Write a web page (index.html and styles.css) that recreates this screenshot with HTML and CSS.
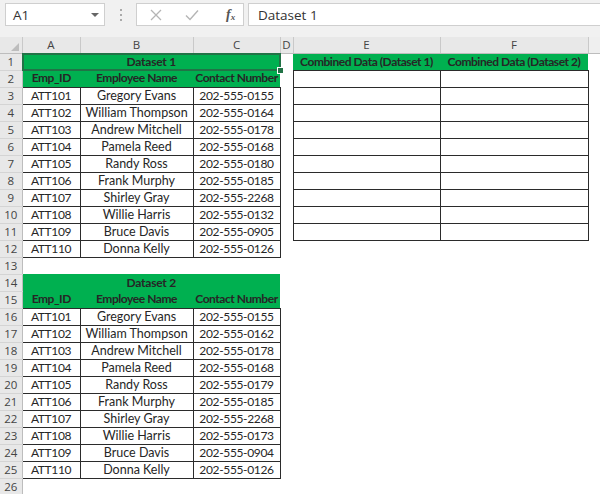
FILE: index.html
```html
<!DOCTYPE html>
<html>
<head>
<meta charset="utf-8">
<link rel="stylesheet" href="styles.css">
</head>
<body>
<div class="fbar">
  <div class="namebox"><span>A1</span><span class="dd"></span></div>
  <div class="dots"><i></i><i></i><i></i></div>
  <div class="btns">
    <svg class="ic" width="12" height="12" viewBox="0 0 12 12"><path d="M1 1L11 11M11 1L1 11" stroke="#b5b5b5" stroke-width="1.3" fill="none"/></svg>
    <svg class="ic" width="14" height="12" viewBox="0 0 14 12"><path d="M1 6.5L5 10.5L13 1.5" stroke="#b5b5b5" stroke-width="1.4" fill="none"/></svg>
    <span class="fx">f<sub>x</sub></span>
  </div>
  <div class="finput">Dataset 1</div>
</div>
<div class="gap"></div>
<table class="sheet">
  <colgroup>
    <col class="c-rh"><col class="c-a"><col class="c-b"><col class="c-c"><col class="c-d"><col class="c-e"><col class="c-f"><col class="c-g">
  </colgroup>
  <tr class="colhdr">
    <th class="corner"><span class="tri"></span></th><th>A</th><th>B</th><th>C</th><th>D</th><th>E</th><th>F</th><th class="last"></th>
  </tr>
  <tr>
    <th class="rh">1</th>
    <td colspan="3" class="title sel">Dataset 1<span class="selbox"><span class="handle"></span></span></td>
    <td></td>
    <td class="hd hd-l">Combined Data (Dataset 1)</td>
    <td class="hd hd-r">Combined Data (Dataset 2)</td>
    <td></td>
  </tr>
  <tr>
    <th class="rh">2</th>
    <td class="hd hd-l">Emp_ID</td><td class="hd hd-m">Employee Name</td><td class="hd hd-r">Contact Number</td>
    <td></td><td class="b"></td><td class="b"></td><td></td>
  </tr>
  <tr class="dr"><th class="rh">3</th><td class="b">ATT101</td><td class="b">Gregory Evans</td><td class="b">202-555-0155</td><td></td><td class="b"></td><td class="b"></td><td></td></tr>
  <tr class="dr"><th class="rh">4</th><td class="b">ATT102</td><td class="b">William Thompson</td><td class="b">202-555-0164</td><td></td><td class="b"></td><td class="b"></td><td></td></tr>
  <tr class="dr"><th class="rh">5</th><td class="b">ATT103</td><td class="b">Andrew Mitchell</td><td class="b">202-555-0178</td><td></td><td class="b"></td><td class="b"></td><td></td></tr>
  <tr class="dr"><th class="rh">6</th><td class="b">ATT104</td><td class="b">Pamela Reed</td><td class="b">202-555-0168</td><td></td><td class="b"></td><td class="b"></td><td></td></tr>
  <tr class="dr"><th class="rh">7</th><td class="b">ATT105</td><td class="b">Randy Ross</td><td class="b">202-555-0180</td><td></td><td class="b"></td><td class="b"></td><td></td></tr>
  <tr class="dr"><th class="rh">8</th><td class="b">ATT106</td><td class="b">Frank Murphy</td><td class="b">202-555-0185</td><td></td><td class="b"></td><td class="b"></td><td></td></tr>
  <tr class="dr"><th class="rh">9</th><td class="b">ATT107</td><td class="b">Shirley Gray</td><td class="b">202-555-2268</td><td></td><td class="b"></td><td class="b"></td><td></td></tr>
  <tr class="dr"><th class="rh">10</th><td class="b">ATT108</td><td class="b">Willie Harris</td><td class="b">202-555-0132</td><td></td><td class="b"></td><td class="b"></td><td></td></tr>
  <tr class="dr"><th class="rh">11</th><td class="b">ATT109</td><td class="b">Bruce Davis</td><td class="b">202-555-0905</td><td></td><td class="b"></td><td class="b"></td><td></td></tr>
  <tr class="dr"><th class="rh">12</th><td class="b">ATT110</td><td class="b">Donna Kelly</td><td class="b">202-555-0126</td><td></td><td></td><td></td><td></td></tr>
  <tr><th class="rh">13</th><td></td><td></td><td></td><td></td><td></td><td></td><td></td></tr>
  <tr>
    <th class="rh">14</th>
    <td colspan="3" class="title">Dataset 2</td>
    <td></td><td></td><td></td><td></td>
  </tr>
  <tr>
    <th class="rh">15</th>
    <td class="hd hd-l">Emp_ID</td><td class="hd hd-m">Employee Name</td><td class="hd hd-r">Contact Number</td>
    <td></td><td></td><td></td><td></td>
  </tr>
  <tr class="dr"><th class="rh">16</th><td class="b">ATT101</td><td class="b">Gregory Evans</td><td class="b">202-555-0155</td><td></td><td></td><td></td><td></td></tr>
  <tr class="dr"><th class="rh">17</th><td class="b">ATT102</td><td class="b">William Thompson</td><td class="b">202-555-0162</td><td></td><td></td><td></td><td></td></tr>
  <tr class="dr"><th class="rh">18</th><td class="b">ATT103</td><td class="b">Andrew Mitchell</td><td class="b">202-555-0178</td><td></td><td></td><td></td><td></td></tr>
  <tr class="dr"><th class="rh">19</th><td class="b">ATT104</td><td class="b">Pamela Reed</td><td class="b">202-555-0168</td><td></td><td></td><td></td><td></td></tr>
  <tr class="dr"><th class="rh">20</th><td class="b">ATT105</td><td class="b">Randy Ross</td><td class="b">202-555-0179</td><td></td><td></td><td></td><td></td></tr>
  <tr class="dr"><th class="rh">21</th><td class="b">ATT106</td><td class="b">Frank Murphy</td><td class="b">202-555-0185</td><td></td><td></td><td></td><td></td></tr>
  <tr class="dr"><th class="rh">22</th><td class="b">ATT107</td><td class="b">Shirley Gray</td><td class="b">202-555-2268</td><td></td><td></td><td></td><td></td></tr>
  <tr class="dr"><th class="rh">23</th><td class="b">ATT108</td><td class="b">Willie Harris</td><td class="b">202-555-0173</td><td></td><td></td><td></td><td></td></tr>
  <tr class="dr"><th class="rh">24</th><td class="b">ATT109</td><td class="b">Bruce Davis</td><td class="b">202-555-0904</td><td></td><td></td><td></td><td></td></tr>
  <tr class="dr"><th class="rh">25</th><td class="b">ATT110</td><td class="b">Donna Kelly</td><td class="b">202-555-0126</td><td></td><td></td><td></td><td></td></tr>
  <tr><th class="rh">26</th><td></td><td></td><td></td><td></td><td></td><td></td><td></td></tr>
</table>
</body>
</html>
```
FILE: styles.css
```css
* { box-sizing: border-box; }
html, body { margin: 0; padding: 0; }
body {
  width: 600px;
  height: 494px;
  overflow: hidden;
  background: #f1f1f1;
  font-family: Lato, "Liberation Sans", sans-serif;
}
.fbar {
  display: flex;
  align-items: center;
  height: 28px;
  padding: 3px 0 2px 5px;
}
.namebox {
  width: 100px;
  height: 23px;
  background: #fff;
  border: 1px solid #cfcfcf;
  display: flex;
  align-items: center;
  justify-content: space-between;
  padding: 0 5px 0 7px;
  font-family: "Open Sans", sans-serif;
  font-size: 13.5px;
  color: #333;
}
.dd {
  width: 0; height: 0;
  border-left: 4px solid transparent;
  border-right: 4px solid transparent;
  border-top: 4px solid #666;
}
.dots {
  width: 31px;
  display: flex;
  flex-direction: column;
  align-items: center;
  gap: 3px;
}
.dots i { width: 2px; height: 2px; background: #aaa; display: block; }
.btns {
  width: 108px;
  height: 23px;
  background: #fff;
  border: 1px solid #cfcfcf;
  display: flex;
  align-items: center;
  padding: 0 0 0 13px;
}
.btns .ic:first-child { margin-right: 23px; }
.btns .ic:nth-child(2) { margin-right: 27px; }
.fx {
  font-family: "Liberation Serif", serif;
  font-style: italic;
  font-size: 14px;
  color: #555;
  font-weight: bold;
}
.fx sub { font-size: 9px; vertical-align: -1px; }
.finput {
  flex: 1;
  height: 23px;
  margin-left: 4px;
  background: #fff;
  border: 1px solid #cfcfcf;
  border-right: none;
  padding-left: 9px;
  display: flex;
  align-items: center;
  font-family: "Open Sans", sans-serif;
  font-size: 13.5px;
  color: #333;
}
.gap { height: 9px; }
.sheet {
  border-collapse: collapse;
  table-layout: fixed;
  width: 600px;
  background: #fff;
}
.c-rh { width: 22px; }
.c-a { width: 58px; }
.c-b { width: 113px; }
.c-c { width: 87px; }
.c-d { width: 13px; }
.c-e { width: 147px; }
.c-f { width: 148px; }
.c-g { width: 12px; }
.sheet tr { height: 17px; }
.sheet td, .sheet th {
  padding: 0;
  white-space: nowrap;
  overflow: hidden;
  text-align: center;
  font-size: 12.5px;
  line-height: 16px;
}
.sheet td { color: #262626; border: none; }
.dr td:nth-child(2), .dr td:nth-child(4) {
  font-size: 12px;
  letter-spacing: -0.35px;
}
.colhdr { height: 16px !important; }
.colhdr th {
  background: #e8e8e8;
  border-right: 1px solid #c9c9c9;
  border-bottom: 1px solid #bdbdbd;
  font-family: "Open Sans", sans-serif;
  font-weight: normal;
  font-size: 11.5px;
  color: #444;
  line-height: 15px;
}
.colhdr th.last { background: #efefef; border-right: none; }
.corner { position: relative; }
.tri {
  position: absolute;
  right: 3px; bottom: 2px;
  width: 0; height: 0;
  border-left: 8px solid transparent;
  border-bottom: 8px solid #bdbdbd;
}
.rh {
  background: #e8e8e8;
  border-right: 1px solid #bdbdbd;
  border-bottom: 1px solid #d4d4d4;
  font-family: "Open Sans", sans-serif;
  font-weight: normal;
  color: #444;
  font-size: 11.5px !important;
}
.b { border: 1px solid #2b2b2b !important; }
.title {
  background: #00b050;
  color: #fff;
  font-weight: bold;
  font-size: 12px !important;
  letter-spacing: -0.2px;
  border: 1px solid #2b2b2b;
}
.sel { position: relative; overflow: visible !important; }
.selbox {
  position: absolute;
  left: -1px; top: -1px; right: -1px; bottom: -1px;
  border: 2px solid #217346;
}
.handle {
  position: absolute;
  right: -5px; bottom: -5px;
  width: 7px; height: 7px;
  background: #217346;
  border: 1px solid #fff;
}
.hd {
  background: #00b050;
  color: #fff;
  font-weight: bold;
  font-size: 12px !important;
  letter-spacing: -0.45px;
  border-top: 1px solid #2b2b2b;
  border-bottom: 1px solid #2b2b2b;
}
.hd-l { border-left: 1px solid #2b2b2b; border-right: 1px solid #fff; }
.hd-m { border-right: 1px solid #fff; }
.hd-r { border-right: 1px solid #2b2b2b; }
```
